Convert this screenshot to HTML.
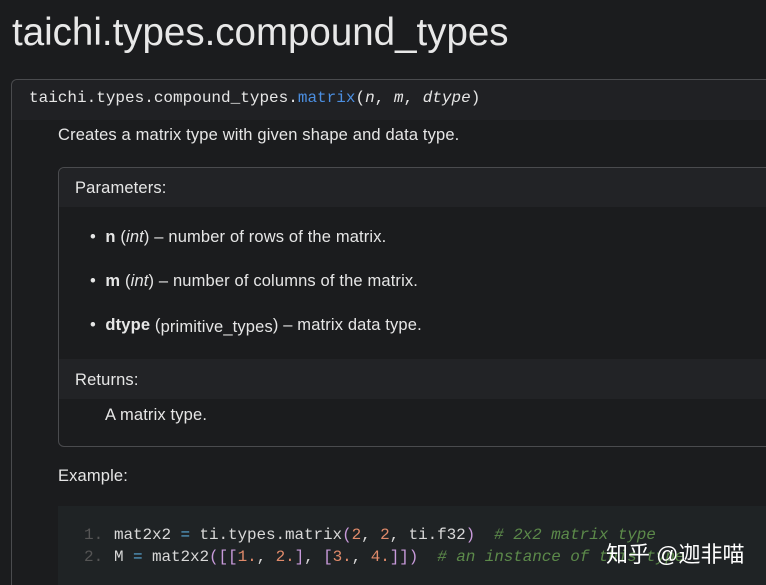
<!DOCTYPE html>
<html><head><style>
html,body{margin:0;width:766px;height:585px;overflow:hidden}
body{background:#1b1c1e;font-family:"Liberation Sans",sans-serif;color:#e6e6e6;position:relative}
.a{position:absolute;white-space:nowrap}
.t{font-size:16.5px;letter-spacing:0.15px}
.mono{font-family:"Liberation Mono",monospace}
</style></head><body>
<div class="a" style="left:12px;top:11px;font-size:38.5px;color:#e8e8e8">taichi.types.compound_types</div>
<div class="a" style="left:11px;top:79px;width:770px;height:506px;border:1px solid #4a4b4e;border-bottom:none;border-radius:6px 6px 0 0;box-sizing:border-box"></div>
<div class="a" style="left:12px;top:80px;width:754px;height:40px;background:#202124;border-radius:6px 0 0 0"></div>
<div class="a mono" style="left:29px;top:89px;font-size:16px;color:#e6e6e6">taichi.types.compound_types.<span style="color:#4b8ee0">matrix</span>(<i>n</i>, <i>m</i>, <i>dtype</i>)</div>
<div class="a t" style="left:58px;top:126px">Creates a matrix type with given shape and data type.</div>
<div class="a" style="left:58px;top:167px;width:720px;height:278px;border:1px solid #4a4b4e;border-radius:6px"></div>
<div class="a" style="left:59px;top:168px;width:707px;height:39px;background:#222326;border-radius:6px 0 0 0"></div>
<div class="a t" style="left:75px;top:179px">Parameters:</div>
<div class="a t" style="left:90px;top:228px">•&nbsp;&nbsp;<b>n</b> (<i>int</i>) – number of rows of the matrix.</div>
<div class="a t" style="left:90px;top:272px">•&nbsp;&nbsp;<b>m</b> (<i>int</i>) – number of columns of the matrix.</div>
<div class="a t" style="left:90px;top:316px">•&nbsp;&nbsp;<b>dtype</b> (<span style="position:relative;top:2px">primitive_types</span>) – matrix data type.</div>
<div class="a" style="left:59px;top:359px;width:707px;height:40px;background:#222326"></div>
<div class="a t" style="left:75px;top:371px">Returns:</div>
<div class="a t" style="left:105px;top:406px">A matrix type.</div>
<div class="a t" style="left:58px;top:467px">Example:</div>
<div class="a" style="left:58px;top:506px;width:708px;height:79px;background:#1f2325"></div>
<div class="a mono" style="left:84px;top:524px;font-size:16px;line-height:22px;color:#555">1.<br>2.</div>
<div class="a mono" style="left:114px;top:524px;font-size:16px;letter-spacing:-0.1px;line-height:22px;color:#d8d8d8">
mat2x2 <span style="color:#5aa8d8">=</span> ti.types.matrix<span style="color:#c89adb">(</span><span style="color:#e08a6a">2</span>, <span style="color:#e08a6a">2</span>, ti.f32<span style="color:#c89adb">)</span>&nbsp;&nbsp;<i style="color:#5c8a4a"># 2x2 matrix type</i><br>
M <span style="color:#5aa8d8">=</span> mat2x2<span style="color:#c89adb">([[</span><span style="color:#e08a6a">1.</span>, <span style="color:#e08a6a">2.</span><span style="color:#c89adb">]</span>, <span style="color:#c89adb">[</span><span style="color:#e08a6a">3.</span>, <span style="color:#e08a6a">4.</span><span style="color:#c89adb">]])</span>&nbsp;&nbsp;<i style="color:#5c8a4a"># an instance of this type</i></div>
<div class="a" style="left:606px;top:537px;font-size:22px;color:#fff;font-family:'Liberation Sans','Noto Sans CJK SC',sans-serif">知乎 @迦非喵</div>
</body></html>
